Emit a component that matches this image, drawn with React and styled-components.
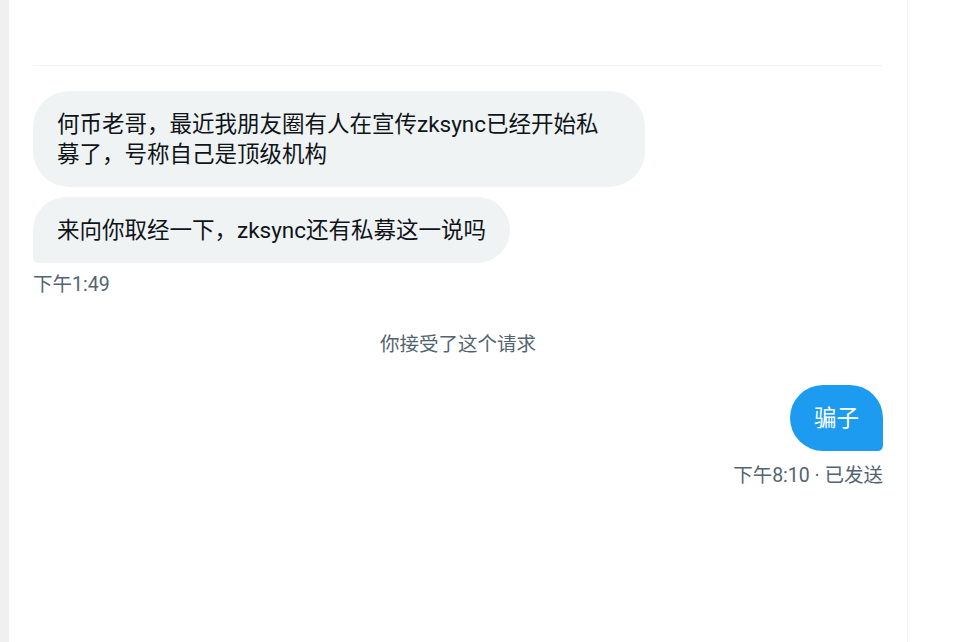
import React from 'react';
import styled, { createGlobalStyle } from 'styled-components';

const GlobalStyle = createGlobalStyle`
  html, body {
    margin: 0;
    padding: 0;
    background: #ffffff;
  }
  body {
    font-family: Roboto, "Noto Sans CJK SC", sans-serif;
    color: #0f1419;
  }
`;

const received = [
  '何币老哥，最近我朋友圈有人在宣传zksync已经开始私募了，号称自己是顶级机构',
  '来向你取经一下，zksync还有私募这一说吗',
];

function App() {
  return (
    <>
      <GlobalStyle />
      <Page>
        <SideStrip />
        <Conversation>
          <Header />
          <MessageList>
            <Group>
              {received.map((text, i) => (
                <Bubble key={i} last={i === received.length - 1}>
                  {text}
                </Bubble>
              ))}
              <Meta>下午1:49</Meta>
            </Group>

            <SystemNote>你接受了这个请求</SystemNote>

            <Group mine>
              <Bubble mine last>骗子</Bubble>
              <Meta>下午8:10 · 已发送</Meta>
            </Group>
          </MessageList>
        </Conversation>
        <Aside />
      </Page>
    </>
  );
}

/////////////////////////

const Page = styled.div`
  display: flex;
  height: 100vh;
  overflow: hidden;
`;

const SideStrip = styled.div`
  width: 9px;
  flex-shrink: 0;
  background: #f0f0f0;
`;

const Conversation = styled.div`
  width: 899px;
  flex-shrink: 0;
  border-right: 1px solid #eff3f4;
  padding: 0 24px;
  box-sizing: border-box;
`;

const Header = styled.div`
  height: 65px;
  border-bottom: 1px solid #eff3f4;
`;

const MessageList = styled.div`
  display: flex;
  flex-direction: column;
  padding-top: 25px;
`;

const Group = styled.div`
  display: flex;
  flex-direction: column;
  align-items: ${(p) => (p.mine ? 'flex-end' : 'flex-start')};
  gap: ${(p) => (p.mine ? '13px' : '10px')};
`;

const Bubble = styled.div`
  max-width: 564px;
  padding: 18px 24px;
  font-size: 22.5px;
  line-height: 30px;
  border-radius: 36px;
  background: ${(p) => (p.mine ? '#1d9bf0' : '#eff3f4')};
  color: ${(p) => (p.mine ? '#ffffff' : '#0f1419')};
  ${(p) =>
    p.last &&
    (p.mine
      ? 'border-bottom-right-radius: 6px;'
      : 'border-bottom-left-radius: 6px;')}
`;

const Meta = styled.div`
  font-size: 19.5px;
  line-height: 24px;
  color: #536471;
`;

const SystemNote = styled.div`
  text-align: center;
  font-size: 19.5px;
  line-height: 24px;
  color: #536471;
  padding: 36px 0 28px;
`;

const Aside = styled.div`
  flex: 1;
  background: #ffffff;
`;

/////////////////////////

export default App;
